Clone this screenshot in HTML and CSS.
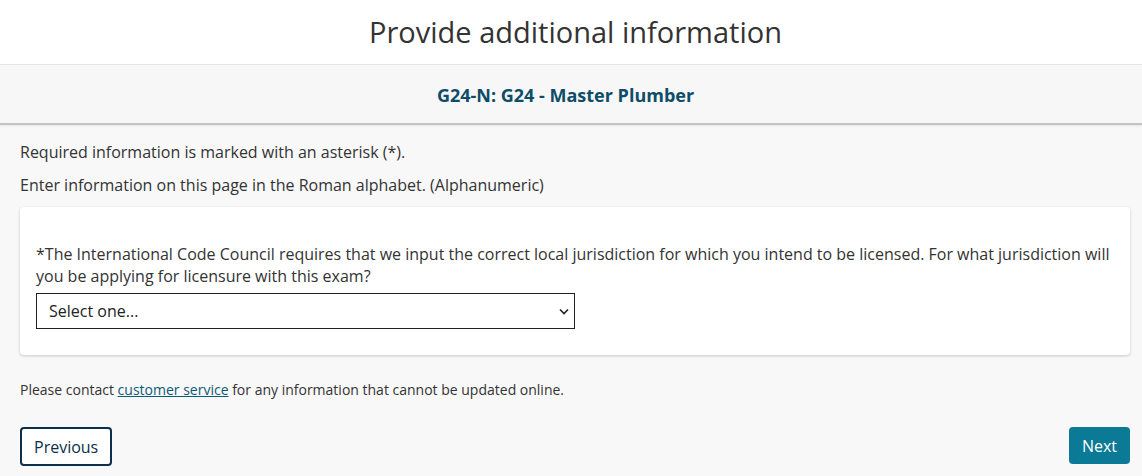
FILE: index.html
```html
<!DOCTYPE html>
<html lang="en">
<head>
<meta charset="utf-8">
<title>Provide additional information</title>
<link rel="stylesheet" href="styles.css">
</head>
<body>
<header class="page-header">
  <h1 class="page-title">Provide additional information</h1>
</header>
<div class="exam-bar">
  <h2 class="exam-title">G24-N: G24 - Master Plumber</h2>
</div>
<main class="content">
  <p class="note">Required information is marked with an asterisk (*).</p>
  <p class="note">Enter information on this page in the Roman alphabet. (Alphanumeric)</p>
  <section class="card">
    <label class="field-label" for="jurisdiction">*The International Code Council requires that we input the correct local jurisdiction for which you intend to be licensed. For what jurisdiction will you be applying for licensure with this exam?</label>
    <div class="select-wrap">
      <select id="jurisdiction" class="select">
        <option>Select one...</option>
      </select>
      <svg class="chevron" width="10" height="7" viewBox="0 0 10 7"><path d="M1 1.5 L5 5.5 L9 1.5" fill="none" stroke="#222" stroke-width="1.6"/></svg>
    </div>
  </section>
  <p class="contact">Please contact <a href="#" class="link">customer service</a> for any information that cannot be updated online.</p>
  <div class="actions">
    <button class="btn btn-secondary" type="button">Previous</button>
    <button class="btn btn-primary" type="button">Next</button>
  </div>
</main>
</body>
</html>
```

FILE: styles.css
```css
* { box-sizing: border-box; }
html, body { margin: 0; padding: 0; }
body {
  font-family: "Open Sans", "Noto Sans", sans-serif;
  background: #f8f8f8;
  color: #333;
  width: 1142px;
  height: 476px;
  overflow: hidden;
}
.page-header {
  background: #fff;
  height: 65px;
  border-bottom: 1px solid #e6e6e6;
  display: flex;
  align-items: center;
  justify-content: center;
  padding-left: 9px;
}
.page-title {
  margin: 0;
  font-size: 29px;
  font-weight: 400;
  color: #333;
  line-height: 1;
  padding-bottom: 1px;
}
.exam-bar {
  height: 60px;
  background: #f7f7f7;
  border-bottom: 2px solid #c4c4c4;
  box-shadow: 0 1px 2px rgba(0,0,0,0.08);
  display: flex;
  align-items: center;
  justify-content: center;
  padding-right: 11px;
}
.exam-title {
  margin: 0;
  font-size: 18px;
  font-weight: 700;
  color: #0e4d69;
  padding-top: 2px;
}
.content {
  padding: 16px 12px 0 20px;
}
.note {
  margin: 0 0 11px;
  font-size: 16px;
  line-height: 22px;
}
.card {
  margin-top: 8px;
  background: #fff;
  border-radius: 4px;
  box-shadow: 0 1px 3px rgba(0,0,0,0.2);
  padding: 36px 16px 26px;
}
.field-label {
  display: block;
  font-size: 16px;
  line-height: 22px;
  margin-bottom: 6px;
}
.select-wrap {
  position: relative;
  width: 539px;
}
.select {
  appearance: none;
  -webkit-appearance: none;
  width: 100%;
  height: 36px;
  border: 1.5px solid #222;
  border-radius: 0;
  background: #fff;
  font-family: inherit;
  font-size: 16px;
  color: #222;
  padding: 0 12px;
}
.chevron {
  position: absolute;
  right: 6px;
  top: 15px;
  pointer-events: none;
}
.contact {
  margin: 25px 0 0;
  font-size: 14px;
  line-height: 20px;
}
.link {
  color: #0e5a78;
  text-decoration: underline;
}
.actions {
  margin-top: 27px;
  display: flex;
  justify-content: space-between;
  align-items: flex-start;
}
.btn {
  font-family: inherit;
  font-size: 16px;
  border-radius: 4px;
  cursor: pointer;
}
.btn-secondary {
  background: #fff;
  border: 2px solid #0b2f4c;
  color: #0b2f4c;
  height: 39px;
  padding: 0 12px;
}
.btn-primary {
  background: #0b7a96;
  border: none;
  color: #fff;
  height: 37px;
  padding: 0 13px;
}
```
